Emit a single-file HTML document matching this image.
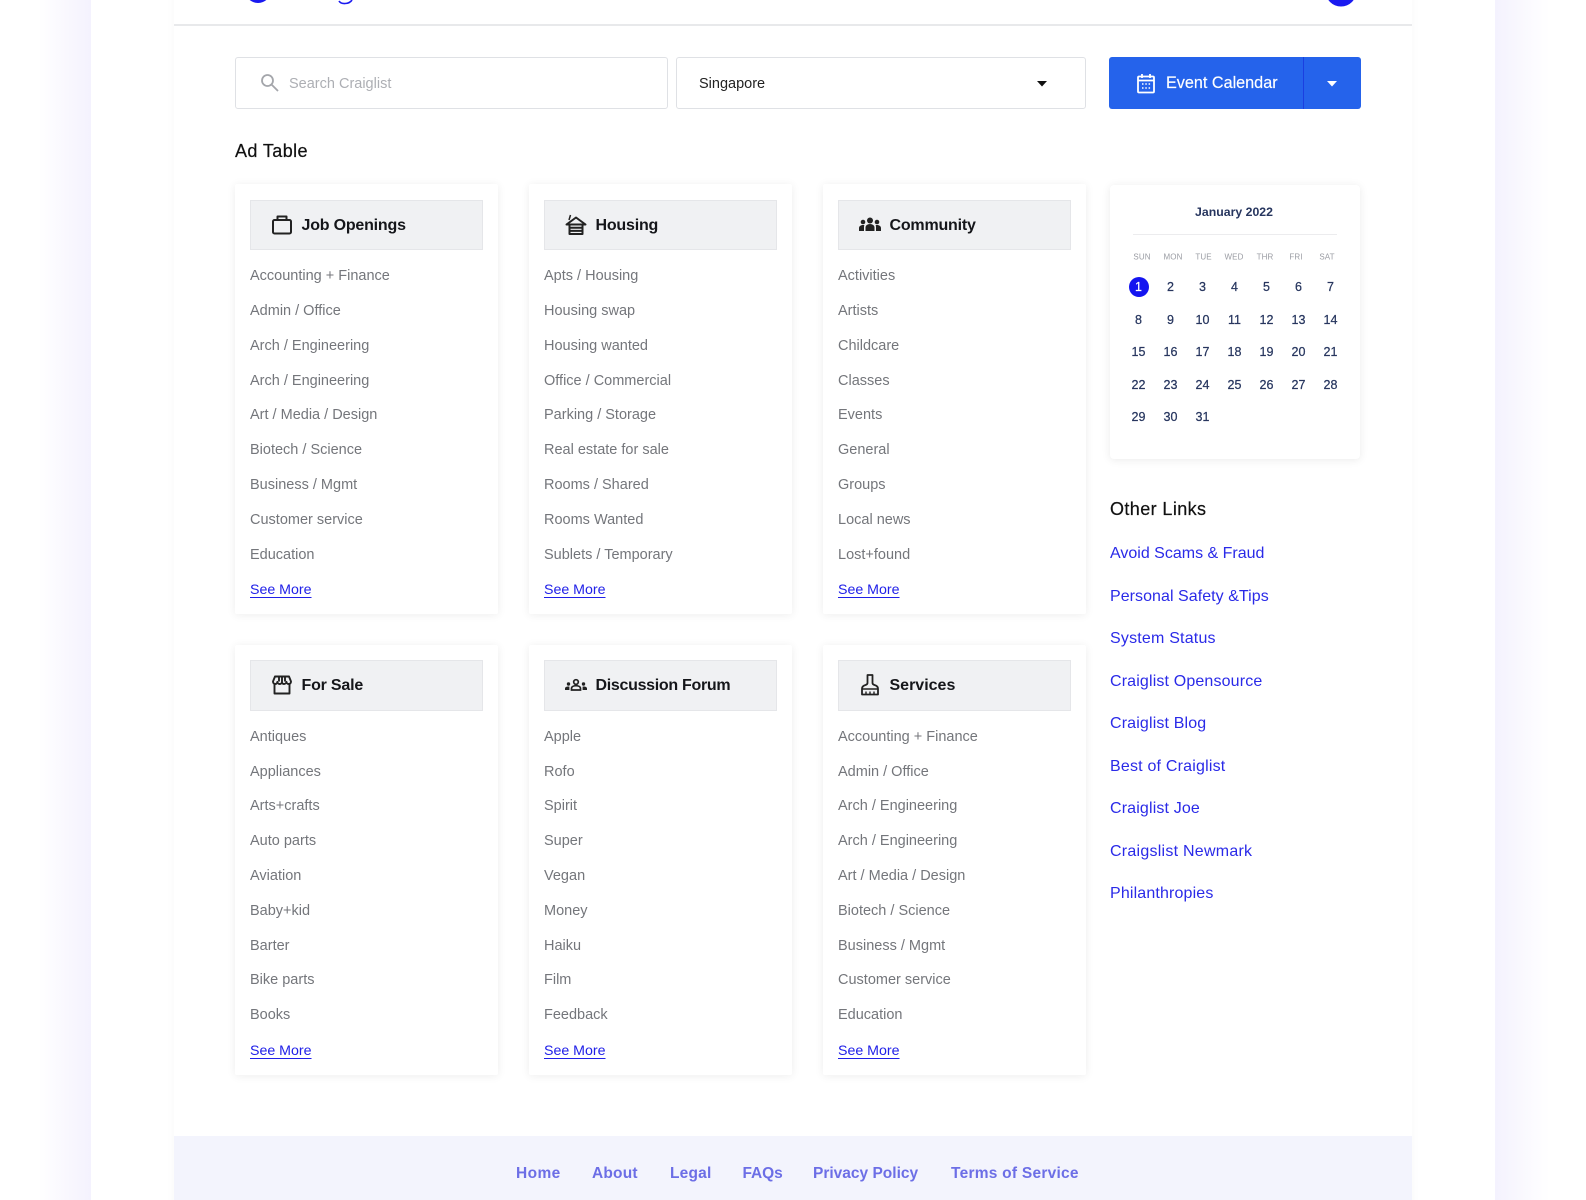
<!DOCTYPE html>
<html lang="en"><head><meta charset="utf-8"><title>Craiglist</title>
<style>
*{box-sizing:border-box;margin:0;padding:0}
html,body{width:1586px;height:1200px;overflow:hidden;background:#fff}
body{position:relative;font-family:"Liberation Sans",sans-serif;color:#111}
#w{position:absolute;left:0;top:0;width:1586px;height:1200px;filter:blur(.3px)}
a{color:inherit;text-decoration:none}
.abs{position:absolute}
.gl{position:absolute;left:38px;top:0;width:53px;height:1200px;background:linear-gradient(90deg,#fff,#f4f2fe)}
.gr{position:absolute;left:1495px;top:0;width:54px;height:1200px;background:linear-gradient(270deg,#fff,#f4f2fe)}
.panel{position:absolute;left:173.500px;top:-10px;width:1238.500px;height:1220px;background:#fff;box-shadow:0 0 10px rgba(0,0,0,.03)}
.hline{position:absolute;left:173.500px;width:1238.500px;top:24px;height:2px;background:#e8e9eb}
.field{position:absolute;top:57px;height:52px;background:#fff;border:1px solid #dfe1e5;border-radius:3px;font-size:14.500px;line-height:53px}
.btn{position:absolute;left:1109px;top:57px;width:251.500px;height:52px;background:#2563eb;border-radius:3px;color:#fff;font-size:16.200px;line-height:53px;-webkit-text-stroke:.15px #fff}
.card{position:absolute;width:263px;height:430px;background:#fff;border-radius:2px;box-shadow:0 1px 9px rgba(0,0,0,.075)}
.ch{position:absolute;left:15px;top:15.500px;width:232.500px;height:50.500px;background:#f0f1f3;border:1px solid #e5e6e9;font-weight:bold;font-size:16px;letter-spacing:-.2px;line-height:49px;padding-left:50.500px;color:#15161a}
.ch svg{position:absolute;left:20px;top:13px;width:22px;height:22px}
.card ul{position:absolute;left:15px;top:75.300px;list-style:none;font-size:14.500px;line-height:34.800px;color:#74767b;white-space:nowrap}
.card li a.m{position:relative;top:1px;color:#2020e8;text-decoration:underline;text-underline-offset:3px;font-size:14.200px}
.cal{position:absolute;left:1110px;top:185px;width:250px;height:274px;background:#fff;border-radius:4px;box-shadow:0 1px 9px rgba(0,0,0,.085)}
.t{position:absolute;white-space:nowrap;transform:translate(-50%,-50%)}
.dn{font-size:8px;color:#9a9ca3;letter-spacing:.1px}
.d{font-size:12.500px;color:#27365f;-webkit-text-stroke:.25px #27365f}
.d.w{color:#fff;-webkit-text-stroke:.2px #fff}
.oh{position:absolute;left:1110px;top:497px;font-size:18px;line-height:24px;color:#111;letter-spacing:.4px;-webkit-text-stroke:.2px #111}
.ol{position:absolute;left:1110px;top:533px;list-style:none;font-size:16px;line-height:42.500px;color:#2a2ae8;white-space:nowrap;letter-spacing:.15px}
.foot{position:absolute;left:173.500px;top:1136px;width:1238.500px;height:64px;background:#f3f4fd}
.fl{position:absolute;top:1164px;font-weight:bold;font-size:15.500px;line-height:20px;color:#6c6ee6;white-space:nowrap}
</style></head>
<body><div id="w">
<div class="gl"></div><div class="gr"></div>
<div class="panel"></div>
<div class="hline"></div>

<svg class="abs" style="left:240px;top:0" width="125" height="8" viewBox="0 0 125 8"><circle cx="18" cy="-10" r="13" fill="#1a1af0"/><path d="M99 1c2 3.500 10 3.500 13-1" fill="none" stroke="#1a1af0" stroke-width="1.600"/></svg>
<svg class="abs" style="left:1325px;top:0" width="32" height="8" viewBox="0 0 32 8"><circle cx="16" cy="-9" r="15.500" fill="#1a1af0"/></svg>

<div class="field" style="left:235px;width:433px;padding-left:53px;color:#adafb4">Search Craiglist</div>
<svg class="abs" style="left:259.500px;top:72.500px" width="20" height="20" viewBox="0 0 20 20" fill="none" stroke="#a4a6ab" stroke-width="1.800"><circle cx="7.500" cy="7.500" r="5.500"/><path d="M11.500 11.500 18 18"/></svg>
<div class="field" style="left:676px;width:410px;padding-left:22px;color:#222">Singapore</div>
<svg class="abs" style="left:1036.500px;top:80.500px" width="11" height="6"><path d="M0 0h10L5 5.500z" fill="#111"/></svg>

<div class="btn"><span class="abs" style="left:57px">Event Calendar</span><span class="abs" style="left:193.500px;top:0;width:1.500px;height:52px;background:#1b3fe0"></span></div>
<svg class="abs" style="left:1136px;top:73px" width="20" height="21" viewBox="0 0 20 21" fill="none" stroke="#fff" stroke-width="1.800"><rect x="2" y="3.500" width="16" height="16" rx="1"/><path d="M2 7.500h16M6 1v4M14 1v4"/><path d="M6 11h1.500M9.300 11h1.500M12.600 11h1.500M6 15h1.500M9.300 15h1.500M12.600 15h1.500" stroke-width="1.400"/></svg>
<svg class="abs" style="left:1327px;top:80.500px" width="11" height="6"><path d="M0 0h10L5 5.500z" fill="#fff"/></svg>

<div class="abs" style="left:235px;top:139px;font-size:18px;line-height:24px;color:#111;letter-spacing:.4px;-webkit-text-stroke:.2px #111">Ad Table</div>

<!-- Job Openings -->
<div class="card" style="left:235px;top:184px"><div class="ch"><svg viewBox="0 0 22 22" fill="none" stroke="#222" stroke-width="2" stroke-linejoin="round"><rect x="2" y="6" width="18" height="13.500" rx="1.500"/><path d="M6.500 6V2.500h9V6"/></svg>Job Openings</div>
<ul><li>Accounting + Finance</li><li>Admin / Office</li><li>Arch / Engineering</li><li>Arch / Engineering</li><li>Art / Media / Design</li><li>Biotech / Science</li><li>Business / Mgmt</li><li>Customer service</li><li>Education</li><li><a class="m" href="#">See More</a></li></ul></div>

<!-- Housing -->
<div class="card" style="left:529px;top:184px"><div class="ch"><svg viewBox="0 0 22 22" fill="none" stroke="#222" stroke-width="2" stroke-linejoin="round"><path d="M1.500 10.500 11 3.500l9.500 7z"/><path d="M5.500 1 4 6" stroke-width="1.500"/><path d="M4.500 10.500v9.500h13v-9.500M4.500 13.700h13M4.500 16.900h13"/></svg>Housing</div>
<ul><li>Apts / Housing</li><li>Housing swap</li><li>Housing wanted</li><li>Office / Commercial</li><li>Parking / Storage</li><li>Real estate for sale</li><li>Rooms / Shared</li><li>Rooms Wanted</li><li>Sublets / Temporary</li><li><a class="m" href="#">See More</a></li></ul></div>

<!-- Community -->
<div class="card" style="left:823px;top:184px"><div class="ch"><svg viewBox="0 0 22 22" fill="#222"><circle cx="11" cy="6.500" r="3"/><circle cx="4" cy="8" r="2.300"/><circle cx="18" cy="8" r="2.300"/><path d="M6.500 17v-3.500c0-2 2-3.500 4.500-3.500s4.500 1.500 4.500 3.500V17z"/><path d="M0 17v-3c0-1.800 1.800-3 4-3 .6 0 1 .1 1.400.2-.4.7-.4 1.500-.4 2.300V17zM22 17v-3c0-1.800-1.800-3-4-3-.6 0-1 .1-1.400.2.400.7.400 1.500.400 2.300V17z"/></svg>Community</div>
<ul><li>Activities</li><li>Artists</li><li>Childcare</li><li>Classes</li><li>Events</li><li>General</li><li>Groups</li><li>Local news</li><li>Lost+found</li><li><a class="m" href="#">See More</a></li></ul></div>

<!-- For Sale -->
<div class="card" style="left:235px;top:644.500px"><div class="ch"><svg viewBox="0 0 22 22" fill="none" stroke="#222" stroke-width="1.900" stroke-linejoin="round"><path d="M4 2.500h14l2 5c0 1.500-1 2.500-2.300 2.500s-2.200-1-2.300-2.200c-.1 1.200-1.100 2.200-2.400 2.200S10.800 9 11 7.800c-.1 1.200-1 2.200-2.300 2.200S6.500 9 6.400 7.800C6.300 9 5.500 10 4.300 10S2 9 2 7.500z"/><path d="M3.500 10v9.500h15V10M8 2.500v5M11 2.500v5M14 2.500v5"/></svg>For Sale</div>
<ul><li>Antiques</li><li>Appliances</li><li>Arts+crafts</li><li>Auto parts</li><li>Aviation</li><li>Baby+kid</li><li>Barter</li><li>Bike parts</li><li>Books</li><li><a class="m" href="#">See More</a></li></ul></div>

<!-- Discussion Forum -->
<div class="card" style="left:529px;top:644.500px"><div class="ch"><svg viewBox="0 0 22 22" fill="none" stroke="#222" stroke-width="1.700"><circle cx="11" cy="8" r="2.300"/><path d="M6.500 16v-1.500c0-1.800 2-2.800 4.500-2.800s4.500 1 4.500 2.800V16z"/><circle cx="3.500" cy="10" r="1.700" fill="#222" stroke="none"/><circle cx="18.500" cy="10" r="1.700" fill="#222" stroke="none"/><path d="M0 16v-1.500c0-1.300 1.500-2 3.500-2l.9.100V16zM22 16v-1.500c0-1.300-1.500-2-3.500-2l-.9.100V16z" fill="#222" stroke="none"/></svg><span style="letter-spacing:-.3px">Discussion Forum</span></div>
<ul><li>Apple</li><li>Rofo</li><li>Spirit</li><li>Super</li><li>Vegan</li><li>Money</li><li>Haiku</li><li>Film</li><li>Feedback</li><li><a class="m" href="#">See More</a></li></ul></div>

<!-- Services -->
<div class="card" style="left:823px;top:644.500px"><div class="ch"><svg viewBox="0 0 22 22" fill="none" stroke="#222" stroke-width="1.800" stroke-linejoin="round"><path d="M8.500 1h5v8c0 1 .5 1.500 2 2 2 .5 3.500 2 3.500 4v5.500H3V15c0-2 1.500-3.500 3.500-4 1.500-.5 2-1 2-2z"/><path d="M3 15h16M7 17.500v3M11 17.500v3M15 17.500v3" stroke-width="1.400"/></svg><span style="letter-spacing:0">Services</span></div>
<ul><li>Accounting + Finance</li><li>Admin / Office</li><li>Arch / Engineering</li><li>Arch / Engineering</li><li>Art / Media / Design</li><li>Biotech / Science</li><li>Business / Mgmt</li><li>Customer service</li><li>Education</li><li><a class="m" href="#">See More</a></li></ul></div>

<!-- Calendar -->
<div class="cal"></div>
<div class="t" style="left:1234px;top:212px;font-size:12.300px;font-weight:bold;color:#27365f">January 2022</div>
<div class="abs" style="left:1133px;top:234px;width:204px;height:1px;background:#ececee"></div>
<div class="t dn" style="left:1142px;top:256.500px">SUN</div><div class="t dn" style="left:1173px;top:256.500px">MON</div><div class="t dn" style="left:1203.500px;top:256.500px">TUE</div><div class="t dn" style="left:1234px;top:256.500px">WED</div><div class="t dn" style="left:1265px;top:256.500px">THR</div><div class="t dn" style="left:1296px;top:256.500px">FRI</div><div class="t dn" style="left:1327px;top:256.500px">SAT</div>
<div class="abs" style="left:1128.500px;top:277px;width:20px;height:20px;border-radius:50%;background:#1414f0"></div>
<div class="t d w" style="left:1138.500px;top:287px">1</div><div class="t d" style="left:1170.500px;top:287px">2</div><div class="t d" style="left:1202.500px;top:287px">3</div><div class="t d" style="left:1234.500px;top:287px">4</div><div class="t d" style="left:1266.500px;top:287px">5</div><div class="t d" style="left:1298.500px;top:287px">6</div><div class="t d" style="left:1330.500px;top:287px">7</div>
<div class="t d" style="left:1138.500px;top:319.500px">8</div><div class="t d" style="left:1170.500px;top:319.500px">9</div><div class="t d" style="left:1202.500px;top:319.500px">10</div><div class="t d" style="left:1234.500px;top:319.500px">11</div><div class="t d" style="left:1266.500px;top:319.500px">12</div><div class="t d" style="left:1298.500px;top:319.500px">13</div><div class="t d" style="left:1330.500px;top:319.500px">14</div>
<div class="t d" style="left:1138.500px;top:352px">15</div><div class="t d" style="left:1170.500px;top:352px">16</div><div class="t d" style="left:1202.500px;top:352px">17</div><div class="t d" style="left:1234.500px;top:352px">18</div><div class="t d" style="left:1266.500px;top:352px">19</div><div class="t d" style="left:1298.500px;top:352px">20</div><div class="t d" style="left:1330.500px;top:352px">21</div>
<div class="t d" style="left:1138.500px;top:384.500px">22</div><div class="t d" style="left:1170.500px;top:384.500px">23</div><div class="t d" style="left:1202.500px;top:384.500px">24</div><div class="t d" style="left:1234.500px;top:384.500px">25</div><div class="t d" style="left:1266.500px;top:384.500px">26</div><div class="t d" style="left:1298.500px;top:384.500px">27</div><div class="t d" style="left:1330.500px;top:384.500px">28</div>
<div class="t d" style="left:1138.500px;top:417px">29</div><div class="t d" style="left:1170.500px;top:417px">30</div><div class="t d" style="left:1202.500px;top:417px">31</div>

<!-- Other links -->
<div class="oh">Other Links</div>
<ul class="ol"><li style="letter-spacing:0">Avoid Scams &amp; Fraud</li><li style="letter-spacing:.05px">Personal Safety &amp;Tips</li><li style="letter-spacing:.2px">System Status</li><li>Craiglist Opensource</li><li>Craiglist Blog</li><li style="letter-spacing:.2px">Best of Craiglist</li><li>Craiglist Joe</li><li style="letter-spacing:.25px">Craigslist Newmark</li><li>Philanthropies</li></ul>

<!-- Footer -->
<div class="foot"></div>
<a class="fl" style="left:516px;letter-spacing:.4px" href="#">Home</a><a class="fl" style="left:592px;letter-spacing:.2px" href="#">About</a><a class="fl" style="left:670px;letter-spacing:.2px" href="#">Legal</a><a class="fl" style="left:742.500px;letter-spacing:-.1px" href="#">FAQs</a><a class="fl" style="left:813px" href="#">Privacy Policy</a><a class="fl" style="left:951px;letter-spacing:.25px" href="#">Terms of Service</a>
</div></body></html>
